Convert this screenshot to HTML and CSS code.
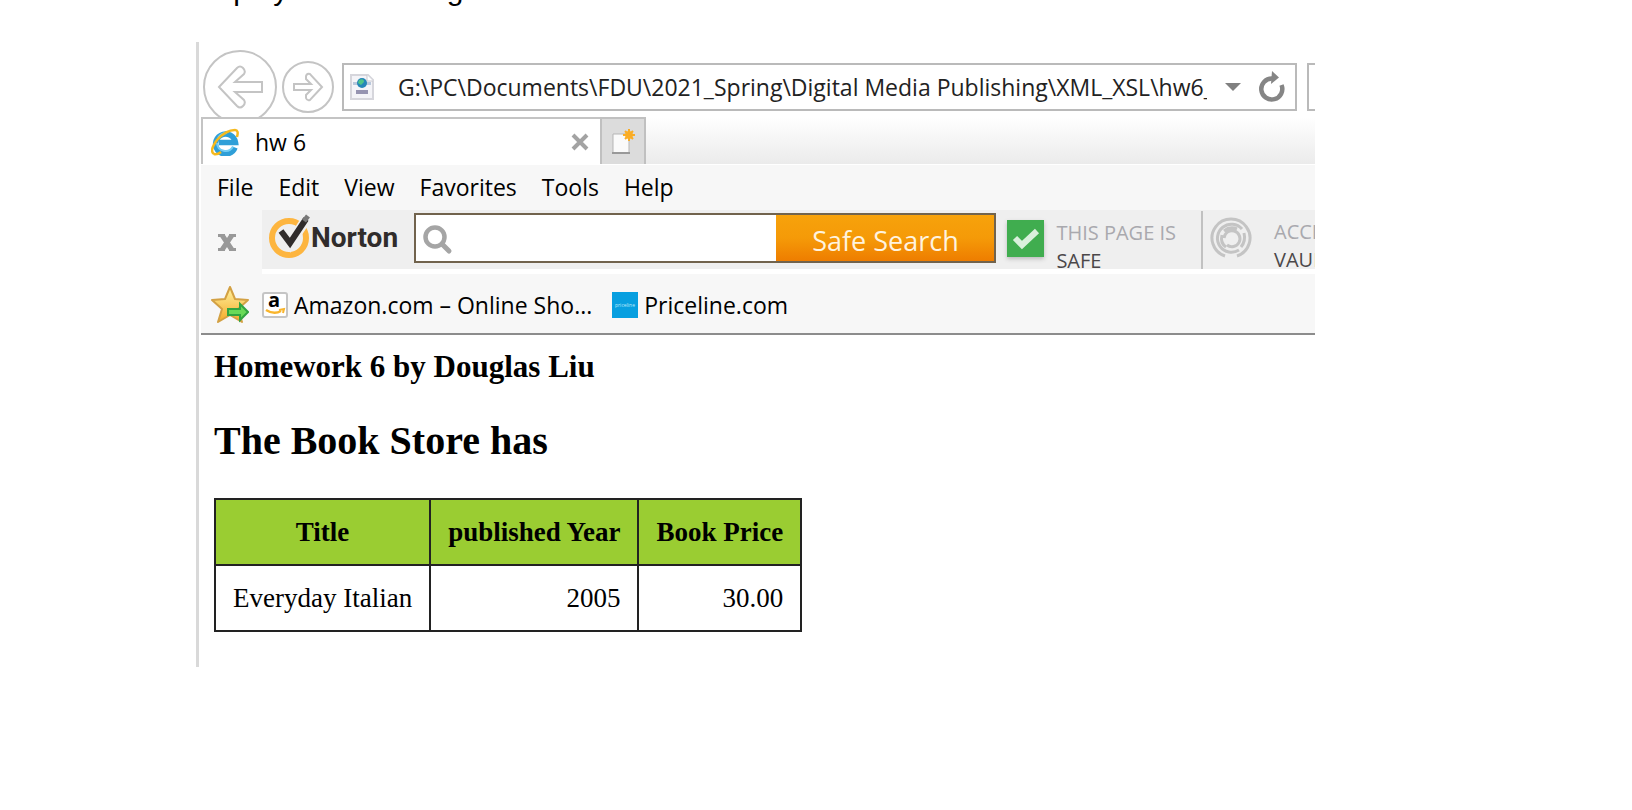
FILE: index.html
```
<!DOCTYPE html>
<html lang="en">
<head>
<meta charset="utf-8">
<title>hw 6</title>
<link rel="stylesheet" href="styles.css">
</head>
<body>
<p class="intro">Display the following</p>
<main class="window">
  <div class="nav">
    <div class="history">
      <button class="back" aria-label="Back"><svg width="76" height="76" viewBox="0 0 76 76"><circle cx="38" cy="38" r="36"/><path d="M17 38 35 19q3-3 6 0t1 6l-9 8h27v10H33l9 8q2 3-1 6t-6 0z"/></svg></button>
      <button class="forward" aria-label="Forward"><svg width="52" height="52" viewBox="0 0 52 52"><circle cx="26" cy="26" r="25"/><path d="M40 26 28 39q-3 1-4-2v-3l5-5H12v-6h17l-5-5v-3q1-3 4-2z"/></svg></button>
    </div>
    <div class="address">
      <svg class="page-icon" width="24" height="26" viewBox="0 0 24 26"><path d="M1 1h17l5 5v19H1z" fill="#f4f4f8" stroke="#d6d6dc" stroke-width="2"/><path d="M17 1v6h6" fill="#fff" stroke="#c8c8d0"/><path d="M3 8h18v3H3z" fill="#b9c8dc"/><circle cx="12" cy="9" r="5" fill="#2586b8"/><path d="M9 6q5-2 5 2l-3 3-3-2z" fill="#4fc488"/><path d="M6 16h12v4H6z" fill="#9694b1"/></svg>
      <input class="url" aria-label="Address" value="G:\PC\Documents\FDU\2021_Spring\Digital Media Publishing\XML_XSL\hw6_">
      <button class="drop" aria-label="Show address list"><svg width="16" height="8" viewBox="0 0 16 8"><path d="M0 0h16L8 8z" fill="#808080"/></svg></button>
      <button class="refresh" aria-label="Refresh"><svg width="28" height="32" viewBox="0 0 28 32"><path d="M15 7.500A10.500 10.500 0 1 0 24.500 14" fill="none" stroke="#858585" stroke-width="4.500"/><path d="M15 0 22 6.500 14 13z" fill="#858585"/></svg></button>
    </div>
    <div class="next-box"></div>
  </div>
  <div class="tabs">
    <div class="tab">
      <svg width="28" height="28" viewBox="0 0 28 28"><path d="M24 19.500A10 10 0 1 1 24.500 14.500H8" fill="none" stroke="#2f9fd8" stroke-width="5.500"/><path d="M22 18.500A8.500 8.500 0 0 1 6 15M7 10q3-5 9-5" fill="none" stroke="#72cdf4" stroke-width="2"/><path d="M3 26Q-2 23 6 12 15 2 24 2q4 0 2 7M3 26q3 1 7-2" fill="none" stroke="#f5b91d" stroke-width="2.500"/></svg>
      <span>hw 6</span>
      <button class="tab-close" aria-label="Close tab"><svg width="18" height="18" viewBox="0 0 18 18"><path d="m2 2 14 14M16 2 2 16" stroke="#a3a3a3" stroke-width="4"/></svg></button>
    </div>
    <button class="new-tab" aria-label="New tab"><svg width="24" height="26" viewBox="0 0 24 26"><path d="M2 5h16v19H2z" fill="#fafafa" stroke="#b5b5b5"/><path d="M1 24h18" stroke="#999" stroke-width="2"/><circle cx="18" cy="6" r="4" fill="#ffb733"/><path d="M18 0v12M12 6h12M14 2l8 8M22 2l-8 8" stroke="#f9ac25" stroke-width="2"/></svg></button>
  </div>
  <nav class="menu"><button>File</button><button>Edit</button><button>View</button><button>Favorites</button><button>Tools</button><button>Help</button></nav>
  <div class="norton-row">
    <button class="bar-close" aria-label="Close toolbar"><svg width="18" height="17" viewBox="0 0 18 17"><path d="m4 1 10 15M14 1 4 16" stroke="#999" stroke-width="5"/><path d="M0 1.500h7M11 1.500h7M0 15.500h7M11 15.500h7" stroke="#999" stroke-width="3"/></svg></button>
    <div class="norton">
      <div class="brand">
        <svg width="44" height="44" viewBox="0 0 44 44"><circle cx="21" cy="24" r="17" fill="none" stroke="#fdb53f" stroke-width="6"/><path d="m13 18 9 12L39 4" fill="none" stroke="#efefef" stroke-width="10"/><path d="m13 17 9 12L38 5" fill="none" stroke="#302c2b" stroke-width="6"/><path d="m36 7 4-5" stroke="#777" stroke-width="5"/></svg>
        <span>Norton</span>
      </div>
      <form class="search">
        <svg width="30" height="30" viewBox="0 0 30 30"><circle cx="12" cy="12" r="9.500" fill="none" stroke="#a5a5a5" stroke-width="4.500"/><path d="m19 19 7 7" stroke="#a5a5a5" stroke-width="5" stroke-linecap="round"/></svg>
        <input aria-label="Search the web">
        <button type="button">Safe Search</button>
      </form>
      <div class="safe"><svg width="37" height="37" viewBox="0 0 37 37"><path d="M0 0h37v37H0z" fill="#40ad4f"/><path d="m8 18 7 7 15-14" fill="none" stroke="#d9f0dc" stroke-width="6"/></svg></div>
      <p class="status">THIS PAGE IS<br><strong>SAFE</strong></p>
      <div class="vault">
        <svg width="42" height="42" viewBox="0 0 42 42"><g fill="none" stroke="#c4c4c4" stroke-width="3"><path d="M15 39A19 19 0 1 1 27 39"/><path d="M32 12A14 14 0 1 0 29 33M34 16q2 8-3 14"/><path d="M14 14q6-5 13-2M12 18q-2 8 4 12M17 28a8 8 0 1 0-3-7"/></g></svg>
        <p class="status">ACCESS<br><strong>VAULT</strong></p>
      </div>
    </div>
  </div>
  <div class="favorites">
    <button class="star" aria-label="Add to favorites"><svg width="38" height="38" viewBox="0 0 38 38"><defs><linearGradient id="gold" x2="0" y2="1"><stop stop-color="#fff3a2"/><stop offset="1" stop-color="#f4aa27"/></linearGradient></defs><path d="m19 1 5 12 13 1-10 9 4 13-12-7-12 7 4-13L1 14l13-1z" fill="url(#gold)" stroke="#d3a144" stroke-width="2" stroke-linejoin="round"/><path d="M17 23h12v-5l8 8-8 8v-5H17z" fill="#69da58" stroke="#32a441" stroke-width="2"/></svg></button>
    <a class="amazon" href="#amazon"><svg width="26" height="26" viewBox="0 0 26 26"><rect x="1" y="1" width="24" height="24" rx="2" fill="#fff" stroke="#c5c5c5" stroke-width="2"/><text x="12" y="15" text-anchor="middle" class="mark">a</text><path d="M4 18q8 5 15 1" fill="none" stroke="#f9b52c" stroke-width="2.500"/><path d="m17 18 5-1-1 4" fill="none" stroke="#f9b52c" stroke-width="2"/></svg><span>Amazon.com – Online Sho...</span></a>
    <a href="#priceline"><svg width="26" height="26" viewBox="0 0 26 26"><path d="M0 0h26v26H0z" fill="#079fe0"/><text x="13" y="15" text-anchor="middle" class="tiny">priceline</text></svg><span>Priceline.com</span></a>
  </div>
  <article class="document">
    <h3>Homework 6 by Douglas Liu</h3>
    <h2>The Book Store has</h2>
    <table>
      <thead><tr><th>Title</th><th>published Year</th><th>Book Price</th></tr></thead>
      <tbody><tr><td>Everyday Italian</td><td class="number">2005</td><td class="number">30.00</td></tr></tbody>
    </table>
  </article>
</main>
</body>
</html>
```
FILE: styles.css
```
* { box-sizing: border-box; }
body { margin: 0; padding: 0 317px 0 196px; background: #fff; color: #000; font-family: "Open Sans", sans-serif; font-size: 23px; line-height: 32px; }
button, input { font: inherit; color: inherit; border: 0; padding: 0; background: none; }
svg { display: block; flex: none; }
p, h2, h3 { margin: 0; }
a { color: inherit; text-decoration: none; }
.intro { height: 42px; margin: -28px 0 28px -6px; font: 30px/36px "Liberation Sans", sans-serif; }
.window { border-left: 3px solid #d9d9d9; padding-left: 2px; height: 625px; overflow: hidden; }
.nav { display: flex; height: 75px; padding-top: 21px; overflow: hidden; }
.history { display: flex; gap: 4px; align-items: center; height: 48px; padding-left: 1px; margin-right: 8px; }
.history svg { fill: #fff; stroke: #c4c4c4; stroke-width: 2; }
.address { display: flex; align-items: center; flex: 1; min-width: 0; height: 48px; border: 2px solid #bababa; padding: 0 10px 0 6px; }
.url { flex: 1; min-width: 0; height: 34px; margin: 0 18px 0 24px; color: #222; }
.drop { margin-right: 16px; }
.next-box { width: 8px; height: 48px; margin-left: 10px; border: 2px solid #bababa; border-right: 0; }
.tabs { display: flex; height: 47px; background: linear-gradient(#fff, #ebebeb); }
.tab { display: flex; align-items: center; gap: 16px; width: 399px; padding: 0 11px 0 8px; background: #fff; border: 2px solid #c4c4c4; border-width: 2px 0 0 2px; }
.tab-close { margin-left: auto; }
.new-tab { display: grid; place-items: center; width: 46px; background: #dcdcdc; border: 2px solid #c0c0c0; border-bottom: 0; }
.menu { display: flex; gap: 25px; align-items: center; height: 46px; padding: 0 0 2px 16px; background: #f7f7f7; border-top: 1px solid #fff; }
.norton-row { display: flex; height: 64px; background: #f7f7f7; }
.bar-close { display: flex; align-items: center; justify-content: center; width: 52px; flex: none; margin-right: 9px; }
.norton { display: flex; flex: 1; min-width: 0; height: 64px; overflow: hidden; background: #efefef; border-bottom: 5px solid #fff; }
.brand { display: flex; width: 152px; flex: none; padding: 4px 0 0 6px; color: #302c2b; }
.brand span { font: 700 28px/48px Roboto, sans-serif; }
.brand svg { margin-right: -1px; }
.search { display: flex; flex: 1; align-items: center; height: 50px; margin-top: 3px; padding-left: 7px; border: 2px solid #71634d; background: #fff; }
.search svg { margin-top: 4px; }
.search input { flex: 1; min-width: 0; height: 44px; outline: 0; }
.search button { width: 218px; height: 46px; padding-top: 6px; color: #fff3df; font-size: 27px; background: linear-gradient(#f7a20b, #f59a08 50%, #ee7d00); }
.safe { padding: 10px 12px 0 11px; flex: none; }
.safe svg { box-shadow: 0 2px 4px #bbb; }
.status { flex: none; margin-top: 9px; color: #a9a9ae; font-size: 20px; line-height: 28px; white-space: nowrap; }
.status strong { color: #4b4749; font-weight: 400; }
.vault { display: flex; flex: none; width: 114px; height: 58px; margin: 1px 0 0 25px; padding-left: 7px; overflow: hidden; border-left: 2px solid #c1c1c1; }
.vault svg { margin: 6px 22px 0 0; }
.vault .status { margin-top: 7px; }
.favorites { display: flex; align-items: center; height: 61px; padding: 2px 0 0 10px; background: #f7f7f7; border-bottom: 2px solid #8c8c8c; }
.favorites a { display: flex; align-items: center; gap: 6px; white-space: nowrap; }
.favorites .amazon { margin: 0 20px 0 13px; }
.mark { font: 700 20px "Open Sans", sans-serif; }
.tiny { font: 5px "Open Sans", sans-serif; fill: #bce9fa; }
.document { padding: 14px 0 0 13px; font-family: "Liberation Serif", serif; }
h3 { font-size: 31px; line-height: 36px; }
h2 { margin: 32px 0 33px; font-size: 40px; line-height: 48px; }
table { border-collapse: collapse; font-size: 27px; }
th, td { border: 2px solid #222; padding: 16px 17px; line-height: 32px; }
th { background: #9acd32; }
.number { text-align: right; }
```
